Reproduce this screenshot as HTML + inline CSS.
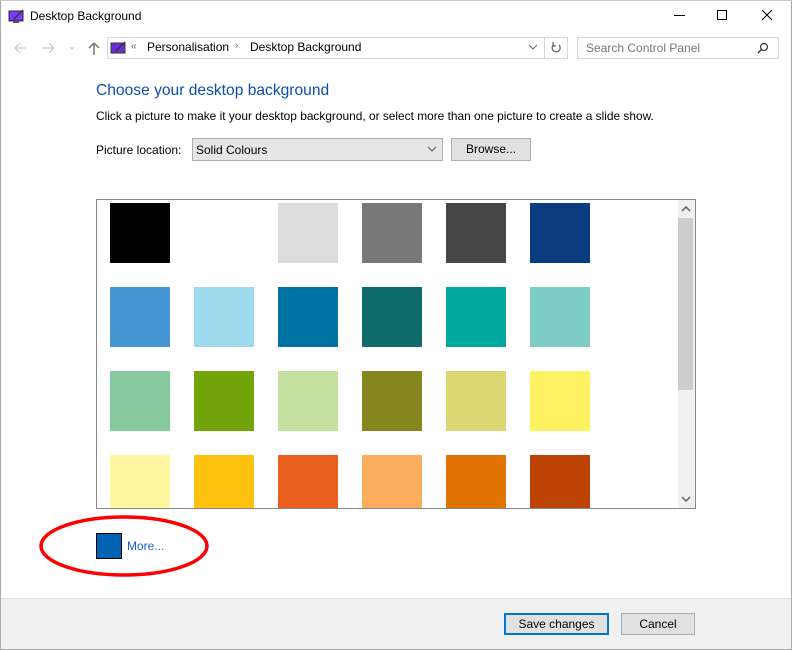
<!DOCTYPE html>
<html><head><style>
*{margin:0;padding:0;box-sizing:border-box}
body{width:792px;height:650px;background:#fff;font-family:"Liberation Sans",sans-serif;font-size:12px;color:#000;position:relative;overflow:hidden}
.a{position:absolute}
.sw{position:absolute;width:60px;height:60px}
</style></head><body>
<div class="a" style="left:0;top:0;width:792px;height:650px;border:1px solid #aaa;border-top-color:#ccc"></div>
<!-- title -->
<svg class="a" style="left:8px;top:8px" width="18" height="16"><rect x="1" y="3" width="14" height="10" fill="#6a2fd8" stroke="#333" stroke-width="1"/><rect x="2" y="4" width="12" height="7" fill="#7b3cff"/><path d="M6 11 L15 2" stroke="#333" stroke-width="1.5"/><rect x="5" y="13" width="6" height="2" fill="#555"/></svg>
<div class="a" style="left:30px;top:9px;font-size:12px">Desktop Background</div>
<div class="a" style="left:674px;top:15px;width:11px;height:1px;background:#000"></div>
<div class="a" style="left:717px;top:10px;width:10px;height:10px;border:1px solid #000"></div>
<svg class="a" style="left:761px;top:9px" width="12" height="12"><path d="M1 1L11 11M11 1L1 11" stroke="#000" stroke-width="1"/></svg>
<!-- nav -->
<svg class="a" style="left:12px;top:40px" width="90" height="16"><path d="M3 8H14M3 8L8 3M3 8L8 13" stroke="#ccc" stroke-width="1.3" fill="none"/><path d="M30 8H42M42 8L37 3M42 8L37 13" stroke="#ccc" stroke-width="1.3" fill="none"/><path d="M58 7L60 9L62 7" stroke="#ccc" fill="none"/><path d="M82 3V15M82 3L77 8M82 3L87 8" stroke="#777" stroke-width="1.5" fill="none"/></svg>
<div class="a" style="left:107px;top:37px;width:438px;height:22px;border:1px solid #d9d9d9"></div>
<div class="a" style="left:545px;top:37px;width:23px;height:22px;border:1px solid #d9d9d9;border-left:none"></div>
<svg class="a" style="left:110px;top:40px" width="18" height="16"><rect x="1" y="3" width="14" height="10" fill="#6a2fd8" stroke="#333"/><path d="M6 11L15 2" stroke="#333" stroke-width="1.5"/></svg>
<div class="a" style="left:131px;top:41px;color:#666;font-size:10px">«</div>
<div class="a" style="left:147px;top:40px">Personalisation</div>
<div class="a" style="left:235px;top:40px;color:#666;font-size:10px">›</div>
<div class="a" style="left:250px;top:40px">Desktop Background</div>
<svg class="a" style="left:528px;top:43px" width="10" height="8"><path d="M1 2L5 6L9 2" stroke="#666" fill="none"/></svg>
<svg class="a" style="left:550px;top:41px" width="12" height="13"><path d="M9 4A4 4 0 1 1 4 3.5" stroke="#666" stroke-width="1.3" fill="none"/><path d="M3 1V5H6" stroke="#666" stroke-width="1.2" fill="none"/></svg>
<div class="a" style="left:577px;top:37px;width:202px;height:22px;border:1px solid #d9d9d9"></div>
<div class="a" style="left:586px;top:41px;color:#777">Search Control Panel</div>
<svg class="a" style="left:757px;top:42px" width="12" height="12"><circle cx="7" cy="5" r="3.5" stroke="#333" fill="none" stroke-width="1.2"/><path d="M4.5 7.5L1 11" stroke="#333" stroke-width="1.5"/></svg>
<!-- content -->
<div class="a" style="left:96px;top:82px;font-size:15.6px;color:#0b4faa">Choose your desktop background</div>
<div class="a" style="left:96px;top:109px;font-size:11.9px">Click a picture to make it your desktop background, or select more than one picture to create a slide show.</div>
<div class="a" style="left:96px;top:143px">Picture location:</div>
<div class="a" style="left:192px;top:138px;width:251px;height:23px;background:#e6e6e6;border:1px solid #acacac"></div>
<div class="a" style="left:196px;top:143px">Solid Colours</div>
<svg class="a" style="left:427px;top:145px" width="10" height="8"><path d="M1 2L5 6L9 2" stroke="#555" fill="none"/></svg>
<div class="a" style="left:451px;top:138px;width:80px;height:23px;background:#e1e1e1;border:1px solid #adadad;text-align:center;line-height:21px">Browse...</div>
<!-- list -->
<div class="a" style="left:96px;top:199px;width:600px;height:310px;border:1px solid #828790;overflow:hidden">
<div class="a" style="left:581px;top:0;width:17px;height:308px;background:#f0f0f0"></div>
<div class="a" style="left:581px;top:18px;width:15px;height:172px;background:#cdcdcd"></div>
<svg class="a" style="left:584px;top:6px" width="10" height="6"><path d="M1 5L5 1L9 5" stroke="#606060" stroke-width="1.5" fill="none"/></svg>
<svg class="a" style="left:584px;top:296px" width="10" height="6"><path d="M1 1L5 5L9 1" stroke="#606060" stroke-width="1.5" fill="none"/></svg>
<div class="sw" style="left:13px;top:3px;background:#000"></div>
<div class="sw" style="left:97px;top:3px;background:#fff"></div>
<div class="sw" style="left:181px;top:3px;background:#dcdcdc"></div>
<div class="sw" style="left:265px;top:3px;background:#787878"></div>
<div class="sw" style="left:349px;top:3px;background:#464646"></div>
<div class="sw" style="left:433px;top:3px;background:#0b3c7d"></div>
<div class="sw" style="left:13px;top:87px;background:#4597d3"></div>
<div class="sw" style="left:97px;top:87px;background:#9fd9ec"></div>
<div class="sw" style="left:181px;top:87px;background:#0073a3"></div>
<div class="sw" style="left:265px;top:87px;background:#0d6b6b"></div>
<div class="sw" style="left:349px;top:87px;background:#00a89d"></div>
<div class="sw" style="left:433px;top:87px;background:#7dcdc6"></div>
<div class="sw" style="left:13px;top:171px;background:#86c99c"></div>
<div class="sw" style="left:97px;top:171px;background:#72a50a"></div>
<div class="sw" style="left:181px;top:171px;background:#c6e09f"></div>
<div class="sw" style="left:265px;top:171px;background:#86861f"></div>
<div class="sw" style="left:349px;top:171px;background:#dcd673"></div>
<div class="sw" style="left:433px;top:171px;background:#fff262"></div>
<div class="sw" style="left:13px;top:255px;background:#fff59e"></div>
<div class="sw" style="left:97px;top:255px;background:#ffc30f"></div>
<div class="sw" style="left:181px;top:255px;background:#e9601e"></div>
<div class="sw" style="left:265px;top:255px;background:#fbac5c"></div>
<div class="sw" style="left:349px;top:255px;background:#e17400"></div>
<div class="sw" style="left:433px;top:255px;background:#bd4306"></div>
</div>
<!-- more -->
<div class="a" style="left:96px;top:533px;width:26px;height:26px;background:#0063b1;border:1px solid #000"></div>
<div class="a" style="left:127px;top:539px;color:#1a5ccc">More...</div>
<svg class="a" style="left:38px;top:514px" width="172" height="66"><ellipse cx="86" cy="32" rx="83" ry="29" stroke="#f00" stroke-width="3.5" fill="none"/></svg>
<!-- footer -->
<div class="a" style="left:1px;top:598px;width:790px;height:51px;background:#f0f0f0;border-top:1px solid #dfdfdf"></div>
<div class="a" style="left:504px;top:613px;width:105px;height:22px;background:#e1e1e1;border:2px solid #0078d7;text-align:center;line-height:18px">Save changes</div>
<div class="a" style="left:621px;top:613px;width:74px;height:22px;background:#e1e1e1;border:1px solid #adadad;text-align:center;line-height:20px">Cancel</div>
</body></html>
